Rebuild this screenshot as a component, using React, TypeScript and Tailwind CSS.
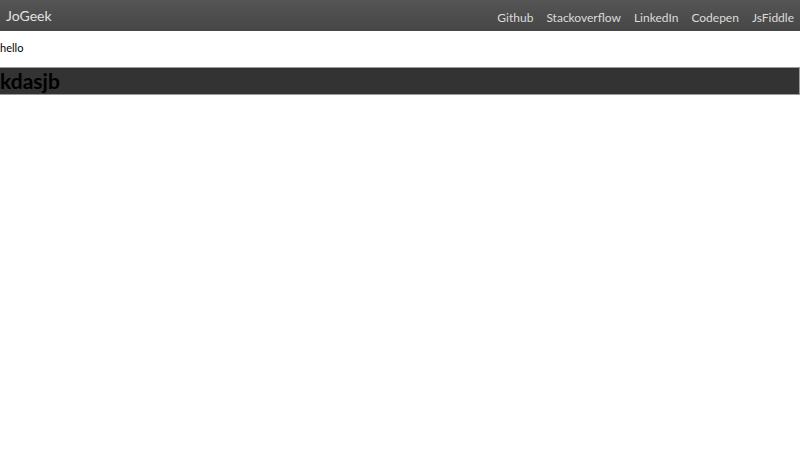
export default function App() {
  const links = ['Github', 'Stackoverflow', 'LinkedIn', 'Codepen', 'JsFiddle'];
  return (
    <div className="min-h-[450px] bg-white font-['Lato',sans-serif]">
      <nav className="flex h-[31px] items-center justify-between bg-gradient-to-b from-[#555555] to-[#464646] pl-[6px] pr-[6px]">
        <span className="text-[14px] text-[#e2e2e2]">JoGeek</span>
        <ul className="flex items-center gap-[13px]">
          {links.map((l) => (
            <li key={l}>
              <a href="#" className="text-[12px] text-[#dcdcdc]">
                {l}
              </a>
            </li>
          ))}
        </ul>
      </nav>
      <p className="mt-[10px] text-[11px] leading-[14px] text-black">hello</p>
      <header className="mt-[12px] border-y border-r border-[#9a9a9a] bg-[#333333]">
        <h1 className="text-[21px] font-bold leading-[26px] text-black">kdasjb</h1>
      </header>
    </div>
  );
}
